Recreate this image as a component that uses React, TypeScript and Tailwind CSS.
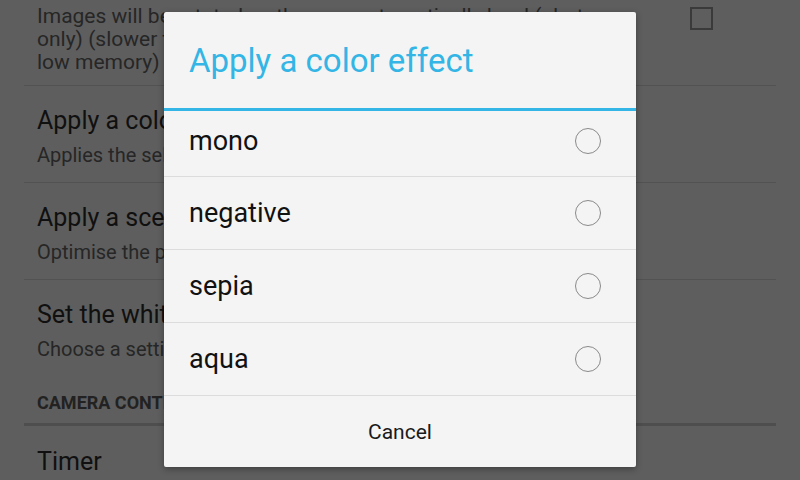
import { useState } from "react";

const font = { fontFamily: "Roboto, 'Liberation Sans', sans-serif" };

const settings = [
  { title: "Apply a color effect", sub: "Applies the selected color effect to the camera preview" },
  { title: "Apply a scene mode", sub: "Optimise the photo for a particular scene" },
  { title: "Set the white balance", sub: "Choose a setting for the lighting conditions" },
];

const effects = ["mono", "negative", "sepia", "aqua"];

function Radio({ on }: { on: boolean }) {
  return (
    <div className="w-[26px] h-[26px] rounded-full border-[1.5px] border-[#8a8a8a] flex items-center justify-center">
      {on && <div className="w-[14px] h-[14px] rounded-full bg-[#33b5e5]" />}
    </div>
  );
}

export default function App() {
  const [picked, setPicked] = useState<string | null>(null);

  return (
    <div className="relative w-[800px] h-[480px] overflow-hidden bg-[#5e5e5e]" style={font}>
      {/* Settings list behind the dialog */}
      <div className="px-[24px]">
        <div className="flex pl-[13px] pt-[5px] pb-[11px] border-b border-[#525252]">
          <p className="w-[590px] text-[21px] leading-[23px] text-[#262626]">
            Images will be rotated so they are automatically level (photos only) (slower to take photos, may fail on
            devices with
            <br />
            low memory)
          </p>
          <div className="ml-auto mr-[63px] mt-[2px] w-[23px] h-[23px] border-2 border-[#3a3a3a]" />
        </div>
        {settings.map((s, i) => (
          <div
            key={s.title}
            className={`pl-[13px] pt-[20px] pb-[15px] ${i < settings.length - 1 ? "border-b border-[#525252]" : ""}`}
          >
            <p className="text-[25px] leading-[30px] text-[#101010]">{s.title}</p>
            <p className="mt-[7px] text-[20px] leading-[24px] text-[#262626] whitespace-nowrap">{s.sub}</p>
          </div>
        ))}
        <p className="pl-[13px] mt-[16px] text-[18px] leading-[22px] font-bold text-[#222]">CAMERA CONTROLS</p>
        <div className="mt-[9px] h-[3px] bg-[#4e4e4e]" />
        <p className="pl-[13px] pt-[21px] text-[25px] leading-[30px] text-[#101010]">Timer</p>
      </div>

      {/* Dialog */}
      <div className="absolute left-[164px] top-[12px] w-[472px] h-[455px] bg-[#f4f4f4] rounded-[2px] shadow-[0_2px_6px_rgba(0,0,0,0.35)] flex flex-col">
        <div className="h-[96px] flex items-center pl-[25px] pt-[2px]">
          <h2 className="text-[33px] text-[#33b5e5]">Apply a color effect</h2>
        </div>
        <div className="h-[3px] bg-[#33b5e5]" />
        {effects.map((e, i) => (
          <button
            key={e}
            onClick={() => setPicked(e)}
            className={`flex items-center justify-between pl-[25px] pr-[35px] border-b border-[#dcdcdc] text-left ${
              i === 0 ? "h-[66px] pb-[5px]" : "h-[73px]"
            }`}
          >
            <span className="text-[27px] text-[#111]">{e}</span>
            <Radio on={picked === e} />
          </button>
        ))}
        <button className="flex-1 flex items-center justify-center pt-[3px] text-[21px] text-[#1a1a1a]">Cancel</button>
      </div>
    </div>
  );
}
